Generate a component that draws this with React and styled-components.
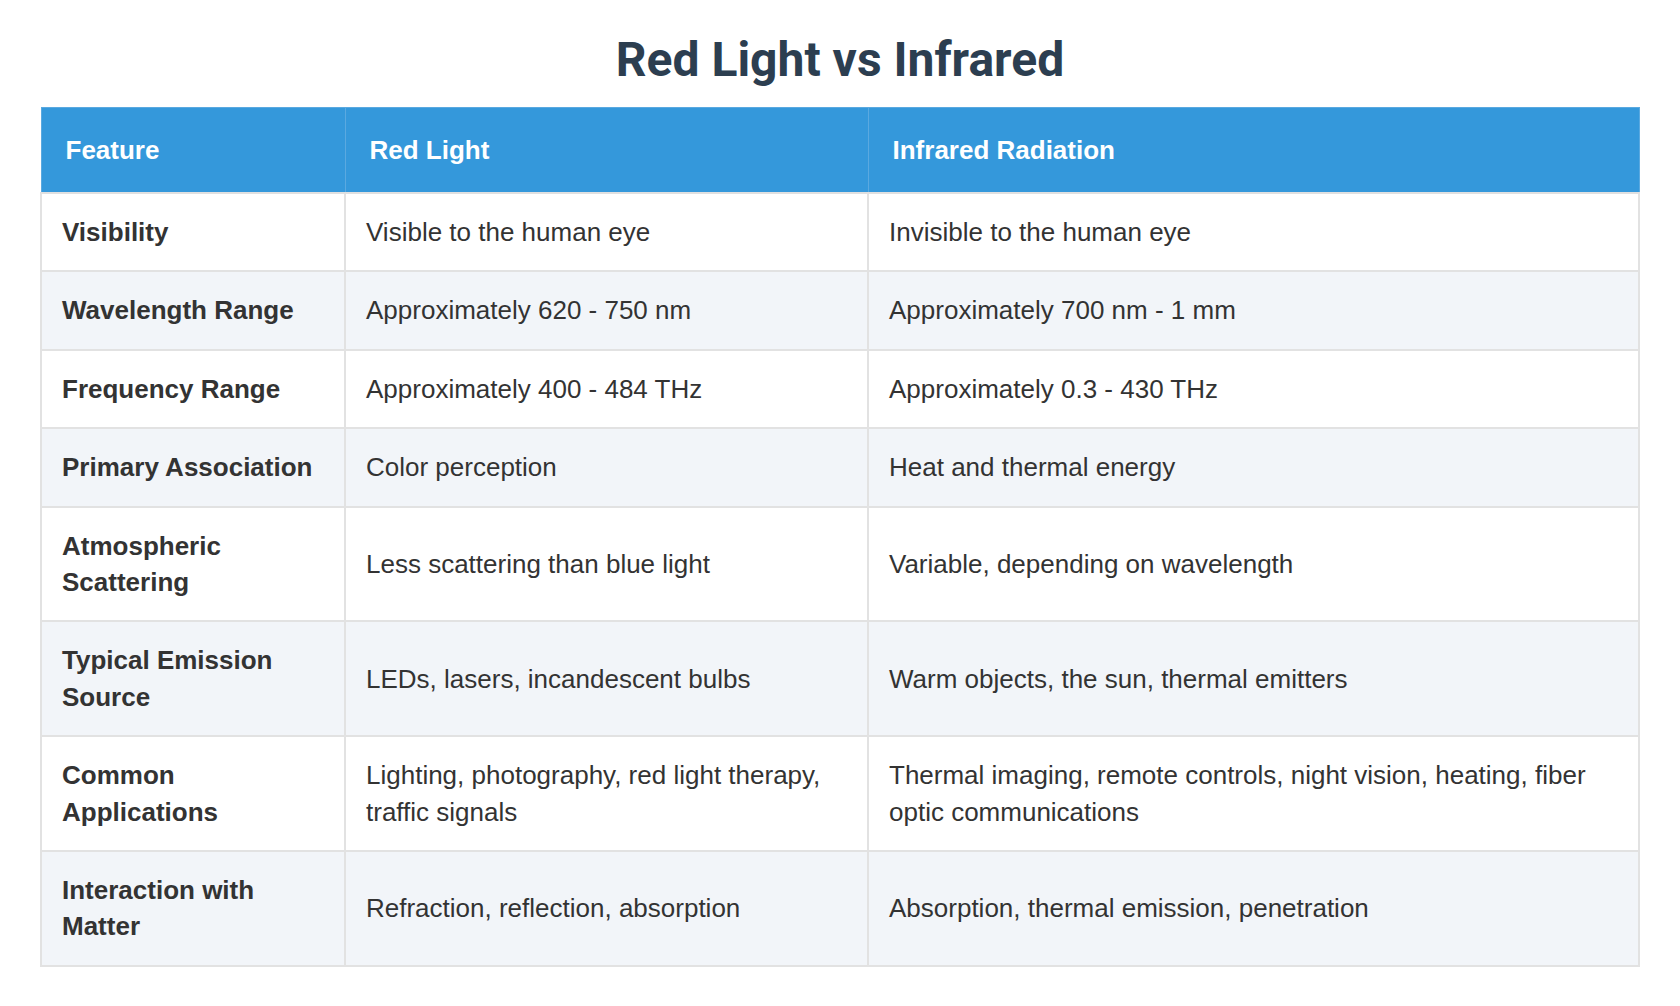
import React from "react";
import styled, { createGlobalStyle } from "styled-components";

const GlobalStyle = createGlobalStyle`
  html, body { margin: 0; padding: 0; background: #ffffff; }
  body { font-family: "Liberation Sans", Arial, sans-serif; color: #333333; }
  *, *::before, *::after { box-sizing: border-box; }
`;

const Page = styled.main`
  padding: 31px 40px 40px;
`;

const Title = styled.h1`
  margin: 0 0 18px;
  font-family: Roboto, "Liberation Sans", sans-serif;
  font-weight: 700;
  font-size: 48px;
  line-height: 57.6px;
  text-align: center;
  color: #2c3e50;
`;

const Table = styled.table`
  width: 100%;
  border-collapse: collapse;
  table-layout: fixed;
  font-size: 26px;
  line-height: 1.4;
`;

const HeadCell = styled.th`
  background: #3498db;
  color: #ffffff;
  font-weight: 700;
  text-align: left;
  padding: 24px 24px;
  border: 1px solid #5aa9e0;
  border-bottom: 2px solid #e0e0e0;
  width: ${(p) => p.$w || "auto"};
`;

const Row = styled.tr`
  background: ${(p) => (p.$alt ? "#f2f5f9" : "#ffffff")};
`;

const Cell = styled.td`
  padding: 20px 20px;
  border: 2px solid #e2e2e2;
  vertical-align: middle;
  color: #333333;
  font-weight: ${(p) => (p.$label ? 700 : 400)};
`;

const rows = [
  ["Visibility", "Visible to the human eye", "Invisible to the human eye"],
  ["Wavelength Range", "Approximately 620 - 750 nm", "Approximately 700 nm - 1 mm"],
  ["Frequency Range", "Approximately 400 - 484 THz", "Approximately 0.3 - 430 THz"],
  ["Primary Association", "Color perception", "Heat and thermal energy"],
  ["Atmospheric Scattering", "Less scattering than blue light", "Variable, depending on wavelength"],
  ["Typical Emission Source", "LEDs, lasers, incandescent bulbs", "Warm objects, the sun, thermal emitters"],
  [
    "Common Applications",
    "Lighting, photography, red light therapy, traffic signals",
    "Thermal imaging, remote controls, night vision, heating, fiber optic communications",
  ],
  ["Interaction with Matter", "Refraction, reflection, absorption", "Absorption, thermal emission, penetration"],
];

export default function App() {
  return (
    <>
      <GlobalStyle />
      <Page>
        <Title>Red Light vs Infrared</Title>
        <Table>
          <thead>
            <tr>
              <HeadCell $w="304px">Feature</HeadCell>
              <HeadCell $w="523px">Red Light</HeadCell>
              <HeadCell>Infrared Radiation</HeadCell>
            </tr>
          </thead>
          <tbody>
            {rows.map((r, i) => (
              <Row key={r[0]} $alt={i % 2 === 1}>
                <Cell $label>{r[0]}</Cell>
                <Cell>{r[1]}</Cell>
                <Cell>{r[2]}</Cell>
              </Row>
            ))}
          </tbody>
        </Table>
      </Page>
    </>
  );
}
